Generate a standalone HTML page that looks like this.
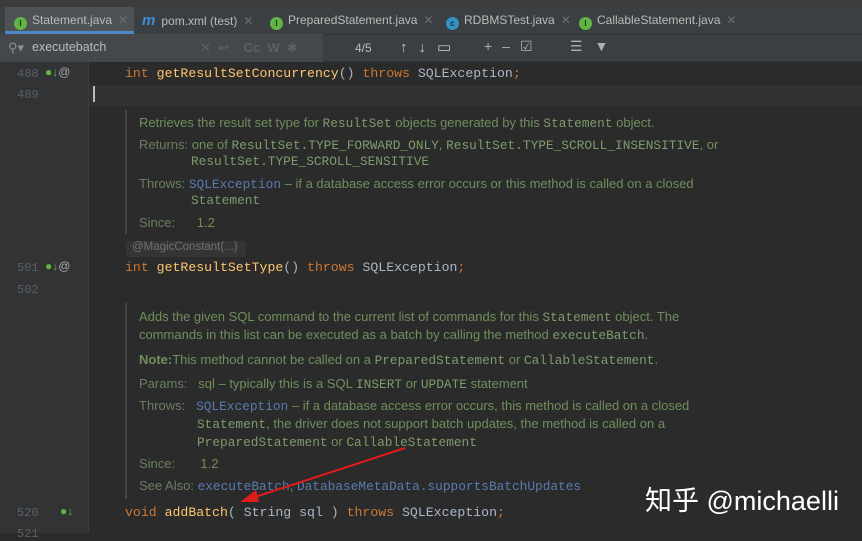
<!DOCTYPE html>
<html><head><meta charset="utf-8"><style>
*{margin:0;padding:0;box-sizing:border-box}
body{width:862px;height:533px;overflow:hidden;background:#2b2b2b;position:relative;font-family:"Liberation Sans",sans-serif}
.a{position:absolute;white-space:nowrap}
.m{font-family:"Liberation Mono",monospace;font-size:13.2px}
.s{font-family:"Liberation Sans",sans-serif;font-size:13px}
.s .m{font-size:12.8px}
.k{color:#cc7832}.f{color:#ffc66d}.d{color:#a9b7c6}
.g{color:#6f8f5c}.gm{color:#7e9c6c}.l{color:#5a7bb0}.lb{color:#6a7f62}
.ln{color:#5c6063;font-family:"Liberation Mono",monospace;font-size:12px}
.tab{position:absolute;top:7px;height:27px;color:#bbbbbb;font-size:12px;line-height:27px}
.ic{display:inline-block;width:13px;height:13px;border-radius:50%;background:#62b543;vertical-align:-2px;margin-right:5px;color:#2b2b2b;font-size:8px;line-height:13px;text-align:center;font-weight:bold}
.x{color:#6b6e70;margin-left:6px}
</style></head><body>
<div class="a" style="left:0;top:0;width:862px;height:7px;background:#3a3c3e"></div>
<div class="a" style="left:0;top:7px;width:862px;height:27px;background:#3c3f41"></div>
<div class="a" style="left:5px;top:7px;width:129px;height:24px;background:#4e5254"></div>
<div class="a" style="left:5px;top:31px;width:129px;height:3px;background:#4a88c7"></div>
<div class="tab" style="left:14px"><span class="ic">I</span>Statement.java<span class="x">✕</span></div>
<div class="tab" style="left:142px"><span style="color:#3b8fd6;font-weight:bold;font-style:italic;font-size:15px;margin-right:6px">m</span>pom.xml (test)<span class="x">✕</span></div>
<div class="tab" style="left:270px"><span class="ic">I</span>PreparedStatement.java<span class="x">✕</span></div>
<div class="tab" style="left:446px"><span class="ic" style="background:#3592c4">c</span>RDBMSTest.java<span class="x">✕</span></div>
<div class="tab" style="left:579px"><span class="ic">I</span>CallableStatement.java<span class="x">✕</span></div>
<div class="a" style="left:0;top:34px;width:862px;height:28px;background:#3c3f41;border-top:1px solid #323232;border-bottom:1px solid #323232"></div>
<div class="a" style="left:0;top:34px;width:323px;height:28px;background:#45484a"></div>
<div class="a" style="left:8px;top:40px;color:#8a8d90;font-size:13px">⚲▾</div>
<div class="a" style="left:32px;top:40px;color:#bbbbbb;font-size:12.5px">executebatch</div>
<div class="a" style="left:200px;top:40px;color:#5e6163;font-size:13px">✕ &nbsp;↩ &nbsp;&nbsp; <b>Cc</b> &nbsp;<b>W</b> &nbsp;✱</div>
<div class="a" style="left:355px;top:41px;color:#bbbbbb;font-size:12px">4/5</div>
<div class="a" style="left:400px;top:38px;color:#c0c3c5;font-size:15px;letter-spacing:11px">↑↓▭</div>
<div class="a" style="left:484px;top:38px;color:#aeb1b3;font-size:14px;letter-spacing:10px">+‒☑</div>
<div class="a" style="left:570px;top:38px;color:#aeb1b3;font-size:14px;letter-spacing:12px">☰▼</div>
<div class="a" style="left:0;top:62px;width:88px;height:471px;background:#313335"></div>
<div class="a" style="left:88px;top:62px;width:1px;height:471px;background:#3a3c3e"></div>
<div class="a" style="left:89px;top:85px;width:773px;height:21px;background:#323232"></div>
<div class="a" style="left:93px;top:86px;width:2px;height:16px;background:#bbbbbb"></div>
<div class="a ln" style="left:17px;top:67px">488</div><div class="a" style="left:45px;top:65px;color:#62b543;font-size:12px">●↓<span style="color:#aaa">@</span></div>
<div class="a ln" style="left:17px;top:88px">489</div>
<div class="a ln" style="left:17px;top:261px">501</div><div class="a" style="left:45px;top:259px;color:#62b543;font-size:12px">●↓<span style="color:#aaa">@</span></div>
<div class="a ln" style="left:17px;top:283px">502</div>
<div class="a ln" style="left:17px;top:506px">520</div><div class="a" style="left:60px;top:504px;color:#62b543;font-size:12px">●↓</div>
<div class="a ln" style="left:17px;top:527px">521</div>
<div class="a m" style="left:125px;top:66px"><span class="k">int</span> <span class="f">getResultSetConcurrency</span><span class="d">()</span> <span class="k">throws</span> <span class="d">SQLException</span><span class="k">;</span></div>
<div class="a" style="left:125px;top:110px;width:2px;height:124px;background:#3d4a3a"></div>
<div class="a s g" style="left:139px;top:115px">Retrieves the result set type for <span class="m gm">ResultSet</span> objects generated by this <span class="m gm">Statement</span> object.</div>
<div class="a s g" style="left:139px;top:137px"><span class="lb">Returns:</span> one of <span class="m gm">ResultSet.TYPE_FORWARD_ONLY</span>, <span class="m gm">ResultSet.TYPE_SCROLL_INSENSITIVE</span>, or</div>
<div class="a m gm" style="left:191px;top:154px;font-size:12.8px">ResultSet.TYPE_SCROLL_SENSITIVE</div>
<div class="a s g" style="left:139px;top:176px"><span class="lb">Throws:</span> <span class="m l">SQLException</span> – if a database access error occurs or this method is called on a closed</div>
<div class="a m gm" style="left:191px;top:193px;font-size:12.8px">Statement</div>
<div class="a s g" style="left:139px;top:215px"><span class="lb">Since:</span>&nbsp;&nbsp;&nbsp;&nbsp;&nbsp; 1.2</div>
<div class="a" style="left:126px;top:241px;width:120px;height:16px;background:#353535;border-radius:3px"></div>
<div class="a s" style="left:132px;top:241px;color:#6e7173;font-size:11.5px">@MagicConstant(...)</div>
<div class="a m" style="left:125px;top:260px"><span class="k">int</span> <span class="f">getResultSetType</span><span class="d">()</span>  <span class="k">throws</span> <span class="d">SQLException</span><span class="k">;</span></div>
<div class="a" style="left:125px;top:303px;width:2px;height:196px;background:#3d4a3a"></div>
<div class="a s g" style="left:139px;top:309px">Adds the given SQL command to the current list of commands for this <span class="m gm">Statement</span> object. The</div>
<div class="a s g" style="left:139px;top:327px">commands in this list can be executed as a batch by calling the method <span class="m gm">executeBatch</span>.</div>
<div class="a s g" style="left:139px;top:352px"><b>Note:</b>This method cannot be called on a <span class="m gm">PreparedStatement</span> or <span class="m gm">CallableStatement</span>.</div>
<div class="a s g" style="left:139px;top:376px"><span class="lb">Params:</span>&nbsp;&nbsp; sql – typically this is a SQL <span class="m gm">INSERT</span> or <span class="m gm">UPDATE</span> statement</div>
<div class="a s g" style="left:139px;top:398px"><span class="lb">Throws:</span>&nbsp;&nbsp; <span class="m l">SQLException</span> – if a database access error occurs, this method is called on a closed</div>
<div class="a s g" style="left:197px;top:416px"><span class="m gm">Statement</span>, the driver does not support batch updates, the method is called on a</div>
<div class="a s g" style="left:197px;top:434px"><span class="m gm">PreparedStatement</span> or <span class="m gm">CallableStatement</span></div>
<div class="a s g" style="left:139px;top:456px"><span class="lb">Since:</span>&nbsp;&nbsp;&nbsp;&nbsp;&nbsp;&nbsp; 1.2</div>
<div class="a s g" style="left:139px;top:478px"><span class="lb">See Also:</span> <span class="m l">executeBatch</span>, <span class="m l">DatabaseMetaData.supportsBatchUpdates</span></div>
<div class="a m" style="left:125px;top:505px"><span class="k">void</span> <span class="f">addBatch</span><span class="d">( String sql )</span> <span class="k">throws</span> <span class="d">SQLException</span><span class="k">;</span></div>
<svg class="a" style="left:0;top:0" width="862" height="533"><line x1="405" y1="448" x2="252" y2="498" stroke="#e01b1b" stroke-width="2"/><polygon points="240,502 256,490 259,502" fill="#e01b1b"/></svg>
<div class="a" style="left:645px;top:479px;color:#fff;font-size:27px;font-family:'Liberation Sans','Noto Sans CJK SC',sans-serif">知乎 @michaelli</div>
</body></html>
